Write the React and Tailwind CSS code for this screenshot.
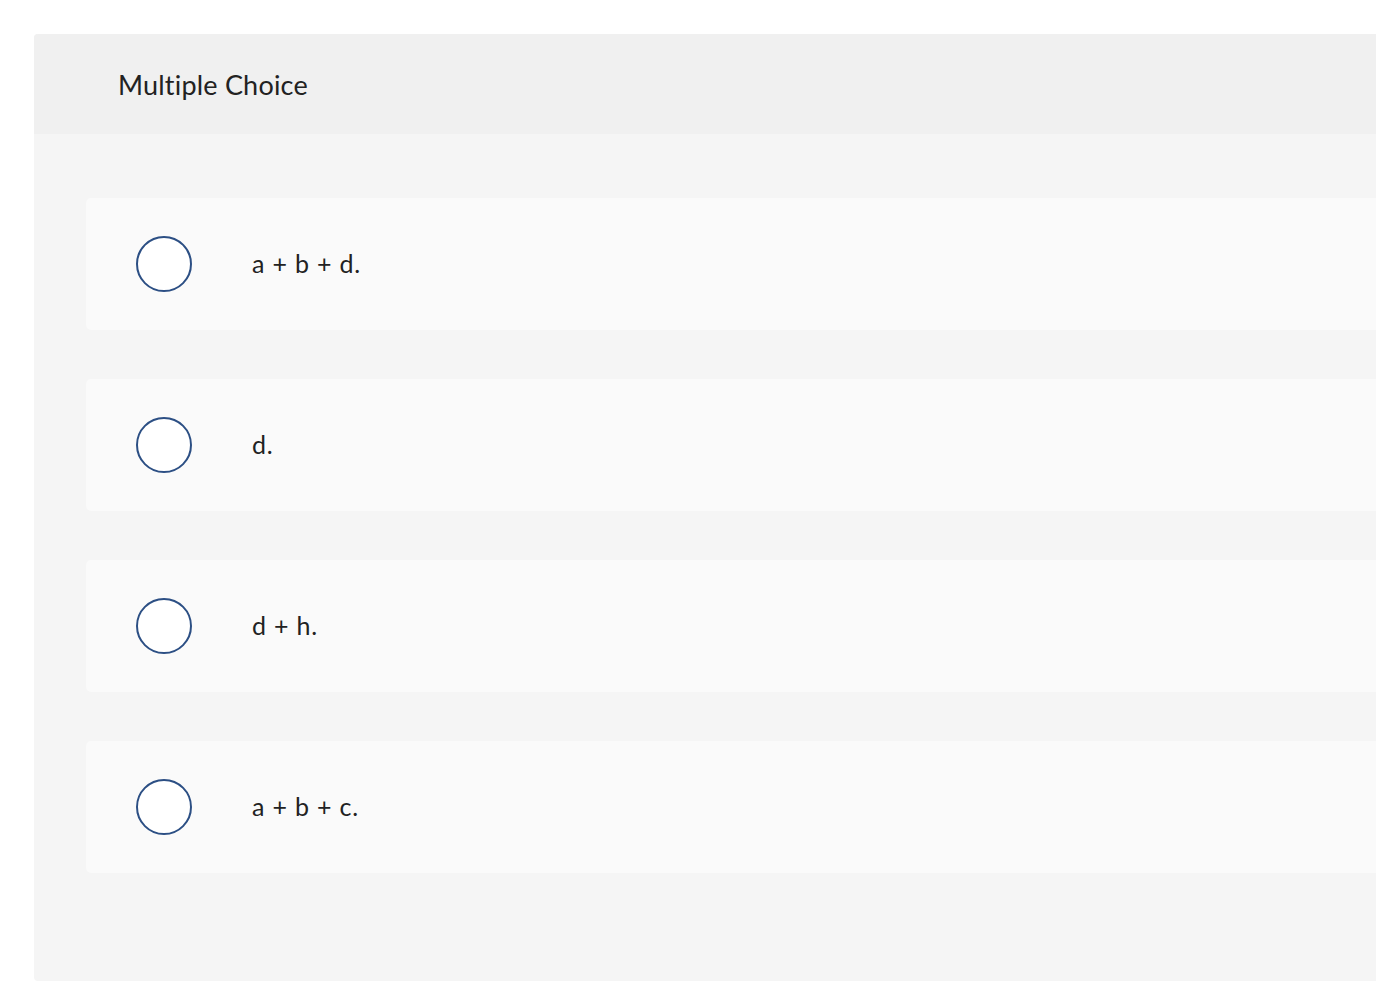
export default function App() {
  const options = ["a + b + d.", "d.", "d + h.", "a + b + c."];
  return (
    <div className="w-[1376px] h-[1008px] overflow-hidden bg-white" style={{ fontFamily: "Lato, 'Open Sans', sans-serif" }}>
      <div className="ml-[34px] mt-[34px] w-[1400px] rounded-[4px] bg-[#f5f5f5] overflow-hidden">
        <div className="h-[100px] bg-[#f0f0f0] flex items-center pl-[84px]">
          <span className="text-[27px] tracking-[0.2px] text-[#222222] leading-none">Multiple Choice</span>
        </div>
        <div className="pt-[64px] pb-[108.5px] pl-[52px] flex flex-col gap-[49.5px]">
          {options.map((o) => (
            <div key={o} className="h-[131.5px] rounded-[5px] bg-[#fafafa] flex items-center pl-[50px]">
              <div className="w-[56px] h-[56px] rounded-full border-2 border-[#2c4f84] bg-white shrink-0" />
              <span className="ml-[60px] text-[25px] tracking-[0.8px] text-[#222222] leading-none">{o}</span>
            </div>
          ))}
        </div>
      </div>
    </div>
  );
}
